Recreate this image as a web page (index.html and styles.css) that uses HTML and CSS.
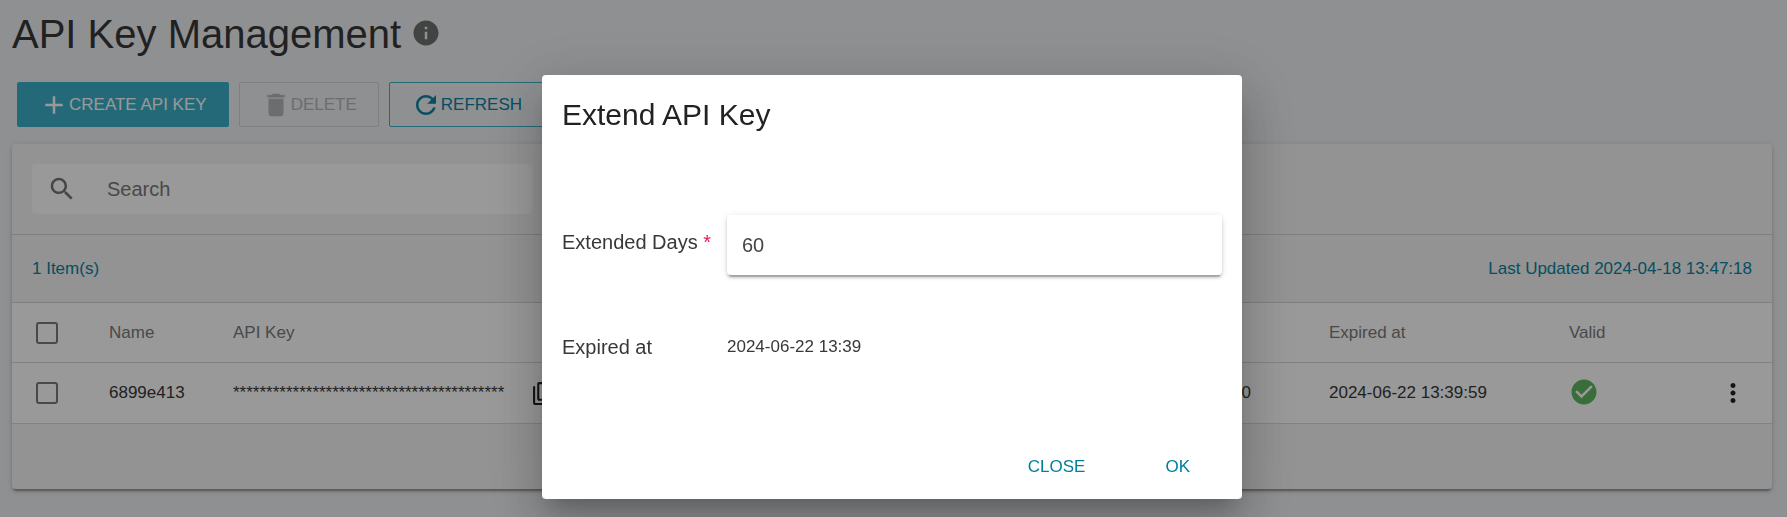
FILE: index.html
```
<!DOCTYPE html>
<html lang="en">
<head>
    <meta charset="UTF-8">
    <meta name="viewport" content="width=device-width, initial-scale=1.0">
    <title>API Key Management</title>
    <link rel="stylesheet" href="styles.css">
</head>
<body>
    <main class="page">
        <header class="page-header">
            <h1>API Key Management</h1>
            <svg class="icon info-icon" viewBox="0 0 24 24"><path d="M12 2C6.48 2 2 6.48 2 12s4.48 10 10 10 10-4.48 10-10S17.52 2 12 2zm1 15h-2v-6h2v6zm0-8h-2V7h2v2z"/></svg>
        </header>

        <div class="toolbar">
            <button type="button" class="btn btn-primary">
                <svg class="icon" viewBox="0 0 24 24"><path d="M19 13h-6v6h-2v-6H5v-2h6V5h2v6h6v2z"/></svg>
                CREATE API KEY
            </button>
            <button type="button" class="btn btn-outline" disabled>
                <svg class="icon" viewBox="0 0 24 24"><path d="M6 19c0 1.1.9 2 2 2h8c1.1 0 2-.9 2-2V7H6v12zM19 4h-3.5l-1-1h-5l-1 1H5v2h14V4z"/></svg>
                DELETE
            </button>
            <button type="button" class="btn btn-outline">
                <svg class="icon" viewBox="0 0 24 24"><path d="M17.65 6.35C16.2 4.9 14.21 4 12 4c-4.42 0-7.99 3.58-7.99 8s3.57 8 7.99 8c3.73 0 6.84-2.55 7.73-6h-2.08c-.82 2.33-3.04 4-5.65 4-3.31 0-6-2.69-6-6s2.69-6 6-6c1.66 0 3.14.69 4.22 1.78L13 11h7V4l-2.35 2.35z"/></svg>
                REFRESH
            </button>
        </div>

        <section class="card">
            <div class="search-row">
                <label class="search-box">
                    <svg class="icon" viewBox="0 0 24 24"><path d="M15.5 14h-.79l-.28-.27C15.41 12.59 16 11.11 16 9.5 16 5.91 13.09 3 9.5 3S3 5.91 3 9.5 5.91 16 9.5 16c1.61 0 3.09-.59 4.23-1.57l.27.28v.79l5 4.99L20.49 19l-4.99-5zm-6 0C7.01 14 5 11.99 5 9.5S7.01 5 9.5 5 14 7.01 14 9.5 11.99 14 9.5 14z"/></svg>
                    <input type="text" placeholder="Search" aria-label="Search">
                </label>
            </div>
            <div class="summary-row">
                <span>1 Item(s)</span>
                <span>Last Updated 2024-04-18 13:47:18</span>
            </div>
            <table class="key-table">
                <colgroup>
                    <col class="col-check">
                    <col class="col-name">
                    <col class="col-key">
                    <col class="col-created">
                    <col class="col-expired">
                    <col class="col-valid">
                    <col class="col-action">
                </colgroup>
                <thead>
                    <tr>
                        <th><input type="checkbox" class="checkbox" aria-label="Select all"></th>
                        <th>Name</th>
                        <th>API Key</th>
                        <th>Created at</th>
                        <th>Expired at</th>
                        <th>Valid</th>
                        <th></th>
                    </tr>
                </thead>
                <tbody>
                    <tr>
                        <td><input type="checkbox" class="checkbox" aria-label="Select 6899e413"></td>
                        <td>6899e413</td>
                        <td>
                            <div class="key-cell">
                                <span>*****************************************</span>
                                <button type="button" class="icon-btn" aria-label="Copy">
                                    <svg class="icon icon-copy" viewBox="0 0 24 24"><path d="M3 5H1v16c0 1.1.9 2 2 2h16v-2H3V5zm18-4H7c-1.1 0-2 .9-2 2v14c0 1.1.9 2 2 2h14c1.1 0 2-.9 2-2V3c0-1.1-.9-2-2-2zm0 16H7V3h14v14z"/></svg>
                                </button>
                            </div>
                        </td>
                        <td>2024-04-18 13:40:00</td>
                        <td>2024-06-22 13:39:59</td>
                        <td><svg class="icon icon-valid" viewBox="0 0 24 24"><path d="M12 2C6.48 2 2 6.48 2 12s4.48 10 10 10 10-4.48 10-10S17.52 2 12 2zm-2 15l-5-5 1.41-1.41L10 14.17l7.59-7.59L19 8l-9 9z"/></svg></td>
                        <td>
                            <button type="button" class="icon-btn" aria-label="More">
                                <svg class="icon" viewBox="0 0 24 24"><path d="M12 8c1.1 0 2-.9 2-2s-.9-2-2-2-2 .9-2 2 .9 2 2 2zm0 2c-1.1 0-2 .9-2 2s.9 2 2 2 2-.9 2-2-.9-2-2-2zm0 6c-1.1 0-2 .9-2 2s.9 2 2 2 2-.9 2-2-.9-2-2-2z"/></svg>
                            </button>
                        </td>
                    </tr>
                </tbody>
            </table>
            <div class="card-footer"></div>
        </section>
    </main>

    <div class="backdrop">
        <div class="dialog" role="dialog" aria-labelledby="dialog-title">
            <h2 id="dialog-title">Extend API Key</h2>
            <form class="dialog-form">
                <div class="form-row">
                    <label for="extended-days">Extended Days <span class="required">*</span></label>
                    <input type="text" id="extended-days" name="extended-days" value="60" required>
                </div>
                <div class="form-row">
                    <span class="row-label">Expired at</span>
                    <span class="row-value">2024-06-22 13:39</span>
                </div>
            </form>
            <div class="dialog-actions">
                <button type="button" class="btn btn-text">CLOSE</button>
                <button type="button" class="btn btn-text">OK</button>
            </div>
        </div>
    </div>
</body>
</html>
```
FILE: styles.css
```
* {
    box-sizing: border-box;
}
body {
    margin: 0;
    min-height: 100vh;
    background-color: #eef0f3;
    color: #383838;
    font-family: "Liberation Sans", Arial, Helvetica, sans-serif;
    font-size: 17px;
    overflow: hidden;
}
button, input {
    font-family: inherit;
    font-size: inherit;
}
.icon {
    display: block;
    flex: none;
    width: 30px;
    height: 30px;
    fill: currentColor;
}
.page {
    padding: 10px 15px 28px 12px;
}
.page-header {
    display: flex;
    align-items: center;
    gap: 10px;
    height: 48px;
}
.page-header h1 {
    margin: 0;
    font-size: 40px;
    font-weight: normal;
}
.info-icon {
    margin-bottom: 2px;
    color: #6e7070;
}

/* Toolbar */
.toolbar {
    display: flex;
    gap: 10px;
    margin: 24px 5px 17px;
}
.btn {
    display: flex;
    align-items: center;
    height: 45px;
    padding: 0 21px;
    border: 1px solid transparent;
    border-radius: 2px;
    background: none;
    cursor: pointer;
}
.btn-primary {
    background-color: #3cb0c7;
    color: #ffffff;
}
.btn-outline {
    border-color: #3cb0c7;
    color: #0a83a0;
}
.btn-outline:disabled {
    border-color: #d2d4d6;
    color: #b4b6b8;
    cursor: default;
}

/* Card */
.card {
    border-radius: 4px;
    background-color: #f5f5f5;
    box-shadow: 0 4px 1px -2px rgba(0, 0, 0, 0.2), 0 3px 3px 0 rgba(0, 0, 0, 0.14), 0 1px 6px 0 rgba(0, 0, 0, 0.12);
}
.search-row {
    padding: 20px;
    border-bottom: 1px solid #d4d4d4;
}
.search-box {
    display: flex;
    align-items: center;
    gap: 30px;
    max-width: 500px;
    height: 50px;
    padding: 0 15px;
    border-radius: 4px;
    background-color: #ffffff;
    color: #757575;
}
.search-box input {
    flex: 1;
    padding: 0;
    border: none;
    outline: none;
    background: none;
    font-size: 20px;
}
.search-box input::placeholder {
    color: #7a7a7a;
}
.summary-row {
    display: flex;
    align-items: center;
    justify-content: space-between;
    height: 68px;
    padding: 0 20px;
    border-bottom: 1px solid #d4d4d4;
    color: #0a83a0;
}
.key-table {
    width: 100%;
    table-layout: fixed;
    border-collapse: separate;
    border-spacing: 0;
    background-color: #ffffff;
}
.key-table th, .key-table td {
    height: 60px;
    padding: 0 20px;
    border-bottom: 1px solid #d9d9d9;
    text-align: left;
    font-weight: normal;
    white-space: nowrap;
}
.key-table td {
    height: 61px;
}
.key-table th {
    color: #7a7a7a;
}
.col-check {
    width: 77px;
}
.col-name {
    width: 124px;
}
.col-created {
    width: 236px;
}
.col-expired {
    width: 240px;
}
.col-valid {
    width: 149px;
}
.col-action {
    width: 74px;
}
.checkbox {
    display: block;
    appearance: none;
    width: 22px;
    height: 22px;
    margin: 0 0 0 4px;
    border: 2px solid #7a7a7a;
    border-radius: 3px;
}
.key-cell {
    display: flex;
    align-items: center;
    gap: 28px;
}
.icon-btn {
    display: block;
    padding: 0;
    border: none;
    background: none;
    color: #222222;
    cursor: pointer;
}
.icon-copy {
    width: 25px;
    height: 25px;
}
.icon-valid {
    margin-bottom: 2px;
    color: #5cb860;
}
.card-footer {
    height: 65px;
}

/* Dialog */
.backdrop {
    position: fixed;
    inset: 0;
    display: flex;
    justify-content: center;
    align-items: flex-start;
    padding: 75px 3px 0 0;
    background-color: rgba(0, 0, 0, 0.4);
}
.dialog {
    width: 100%;
    max-width: 700px;
    border-radius: 4px;
    background-color: #ffffff;
    box-shadow: 0 14px 19px -9px rgba(0, 0, 0, 0.2), 0 30px 48px 4px rgba(0, 0, 0, 0.14), 0 11px 58px 10px rgba(0, 0, 0, 0.12);
}
.dialog h2 {
    margin: 0;
    padding: 20px;
    font-size: 30px;
    line-height: 40px;
    font-weight: normal;
    color: #222222;
}
.dialog-form {
    display: grid;
    gap: 42px;
    padding: 60px 20px 57px;
}
.form-row {
    display: grid;
    grid-template-columns: 165px 1fr;
    align-items: center;
    min-height: 60px;
}
.form-row label, .row-label {
    font-size: 20px;
}
.form-row label {
    padding-bottom: 6px;
}
.form-row input {
    width: 100%;
    height: 60px;
    padding: 0 15px;
    border: none;
    border-radius: 4px;
    background-color: #ffffff;
    box-shadow: 0 4px 1px -2px rgba(0, 0, 0, 0.2), 0 3px 3px 0 rgba(0, 0, 0, 0.14), 0 1px 6px 0 rgba(0, 0, 0, 0.12);
    color: #444444;
    font-size: 20px;
}
.required {
    color: #e91e50;
}
.dialog-actions {
    display: flex;
    justify-content: flex-end;
    gap: 36px;
    padding: 10px 30px;
}
.btn-text {
    color: #007e9d;
}
```
